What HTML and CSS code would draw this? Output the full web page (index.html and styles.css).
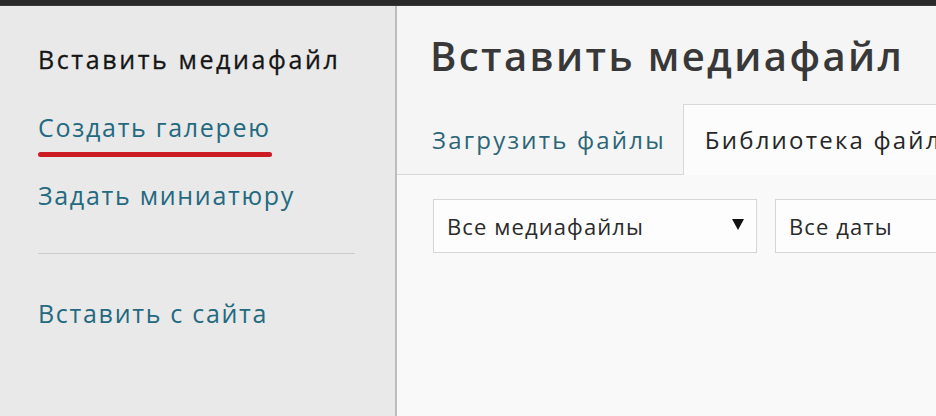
FILE: index.html
```html
<!DOCTYPE html>
<html lang="ru">
<head>
<meta charset="utf-8">
<title>Вставить медиафайл</title>
<link rel="stylesheet" href="styles.css">
</head>
<body>
<div class="topbar"></div>
<div class="frame">
  <aside class="sidebar">
    <div class="menu-item current">Вставить медиафайл</div>
    <div class="menu-item link marked">Создать галерею</div>
    <div class="menu-item link">Задать миниатюру</div>
    <div class="separator"></div>
    <div class="menu-item link last">Вставить с сайта</div>
  </aside>
  <main class="content">
    <h1 class="title">Вставить медиафайл</h1>
    <nav class="tabs">
      <div class="tab">Загрузить файлы</div>
      <div class="tab active">Библиотека файлов</div>
    </nav>
    <div class="toolbar">
      <div class="select wide">
        <span>Все медиафайлы</span>
        <svg class="arrow" width="12" height="12" viewBox="0 0 12 12"><polygon points="0,1 12,1 6,12" fill="#111"/></svg>
      </div>
      <div class="select">
        <span>Все даты</span>
      </div>
    </div>
  </main>
</div>
</body>
</html>
```
FILE: styles.css
```css
html, body {
  margin: 0;
  padding: 0;
}
body {
  width: 936px;
  height: 416px;
  overflow: hidden;
  font-family: "Open Sans", "Noto Sans", sans-serif;
  background: #f7f7f7;
}
.topbar {
  height: 6px;
  background: #2a2a2a;
  border-bottom: 1px solid #3a3a3a;
  box-sizing: border-box;
}
.frame {
  display: flex;
  height: 410px;
}
.sidebar {
  width: 397px;
  flex: none;
  box-sizing: border-box;
  background: #e9e9e9;
  border-right: 2px solid #bdbdbd;
  padding: 36px 0 0 38px;
}
.menu-item {
  font-size: 25px;
  line-height: 34px;
  letter-spacing: 1.7px;
  color: #1f1f1f;
  white-space: nowrap;
  margin-bottom: 34px;
  position: relative;
}
.menu-item.current {
  letter-spacing: 2.6px;
  color: #151515;
  -webkit-text-stroke: 0.3px #151515;
}
.menu-item.link {
  color: #236a80;
}
.menu-item.marked::after {
  content: "";
  position: absolute;
  left: 0;
  top: 42px;
  width: 234px;
  height: 5px;
  border-radius: 3px;
  background: #cc1b22;
}
.menu-item:nth-child(3) {
  margin-bottom: 41px;
}
.separator {
  width: 317px;
  height: 1px;
  background: #cdcdcd;
  margin-bottom: 42px;
}
.content {
  flex: 1;
  min-width: 0;
  overflow: hidden;
  background: #f9f9f9;
}
.title {
  margin: 0;
  padding: 25px 0 0 33px;
  font-size: 40px;
  line-height: 50px;
  font-weight: 600;
  letter-spacing: 2.4px;
  color: #383838;
  white-space: nowrap;
  background: #f5f5f5;
}
.tabs {
  display: flex;
  align-items: flex-end;
  padding: 23px 0 0 34px;
  border-bottom: 1px solid #d8d8d8;
  background: #f5f5f5;
  white-space: nowrap;
}
.tab {
  font-size: 24px;
  line-height: 34px;
  letter-spacing: 2.2px;
  padding: 18px 16px 17px 0;
  border: 1px solid transparent;
  border-bottom: none;
  color: #2b6577;
}
.tab.active {
  padding-left: 21px;
  padding-right: 40px;
  border-color: #d8d8d8;
  background: #fcfcfc;
  color: #262626;
  margin-bottom: -1px;
  padding-bottom: 18px;
}
.toolbar {
  display: flex;
  gap: 18px;
  padding: 24px 0 0 36px;
  white-space: nowrap;
}
.select {
  height: 54px;
  box-sizing: border-box;
  border: 1px solid #d6d6d6;
  background: #fdfdfd;
  display: flex;
  align-items: center;
  padding: 0 12px 0 13px;
  font-size: 22px;
  letter-spacing: 1.1px;
  color: #2a2a2a;
  flex: none;
  width: 200px;
}
.select.wide {
  width: 324px;
  justify-content: space-between;
}
.arrow {
  margin-top: -4px;
}
```
